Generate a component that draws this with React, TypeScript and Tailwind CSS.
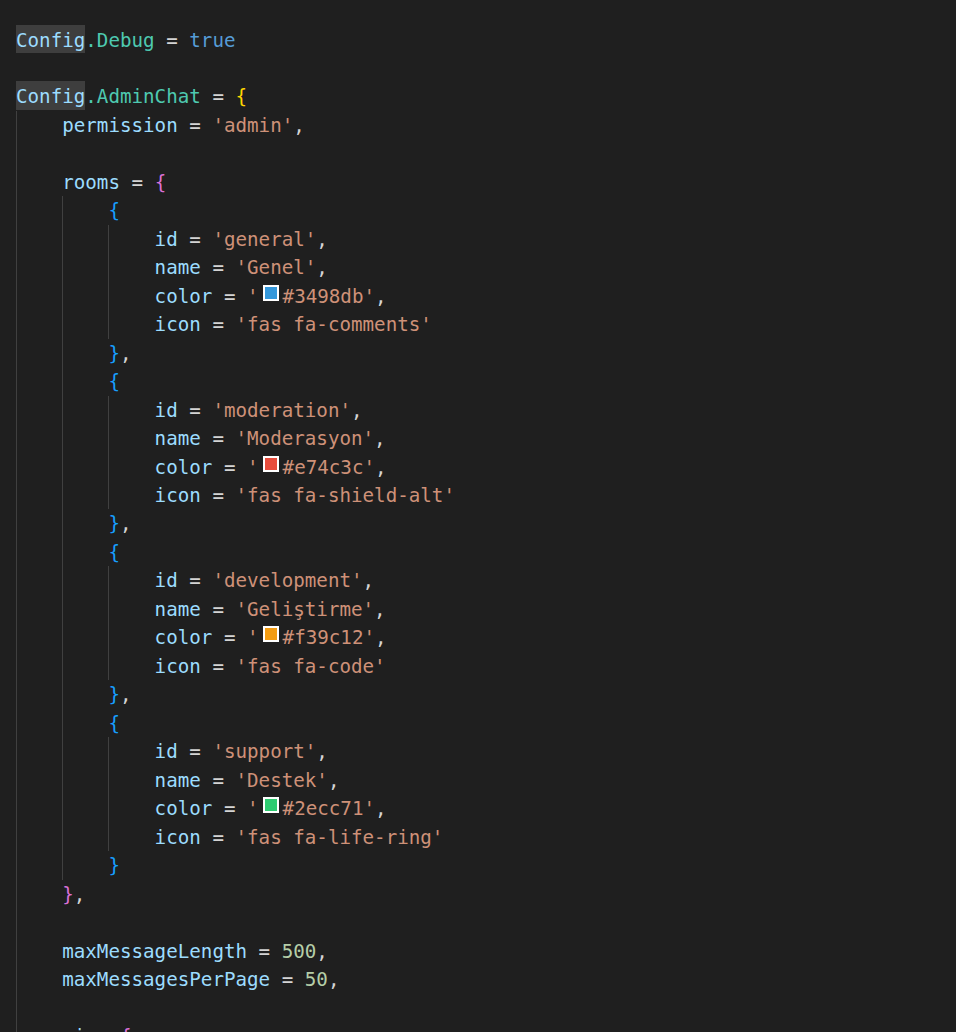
type Tok = { t: string; c?: string; hl?: boolean; swatch?: string };
type Line = { indent: number; toks: Tok[] };

const v = "text-[#9cdcfe]";
const p = "text-[#4ec9b0]";
const o = "text-[#d4d4d4]";
const s = "text-[#ce9178]";

const assign = (name: string, value: string): Tok[] => [
  { t: name, c: v },
  { t: " = ", c: o },
  { t: value, c: s },
  { t: ",", c: o },
];

const room = (id: string, name: string, color: string, icon: string): Line[] => [
  { indent: 2, toks: [{ t: "{", c: "text-[#179fff]" }] },
  { indent: 3, toks: assign("id", `'${id}'`) },
  { indent: 3, toks: assign("name", `'${name}'`) },
  {
    indent: 3,
    toks: [
      { t: "color", c: v },
      { t: " = ", c: o },
      { t: "'", c: s },
      { t: "", swatch: color },
      { t: `${color}'`, c: s },
      { t: ",", c: o },
    ],
  },
  {
    indent: 3,
    toks: [
      { t: "icon", c: v },
      { t: " = ", c: o },
      { t: `'${icon}'`, c: s },
    ],
  },
];

const lines: Line[] = [
  {
    indent: 0,
    toks: [
      { t: "Config", c: v, hl: true },
      { t: ".Debug", c: p },
      { t: " = ", c: o },
      { t: "true", c: "text-[#569cd6]" },
    ],
  },
  { indent: 0, toks: [] },
  {
    indent: 0,
    toks: [
      { t: "Config", c: v, hl: true },
      { t: ".AdminChat", c: p },
      { t: " = ", c: o },
      { t: "{", c: "text-[#ffd700]" },
    ],
  },
  { indent: 1, toks: assign("permission", "'admin'") },
  { indent: 1, toks: [] },
  {
    indent: 1,
    toks: [
      { t: "rooms", c: v },
      { t: " = ", c: o },
      { t: "{", c: "text-[#da70d6]" },
    ],
  },
  ...room("general", "Genel", "#3498db", "fas fa-comments"),
  { indent: 2, toks: [{ t: "}", c: "text-[#179fff]" }, { t: ",", c: o }] },
  ...room("moderation", "Moderasyon", "#e74c3c", "fas fa-shield-alt"),
  { indent: 2, toks: [{ t: "}", c: "text-[#179fff]" }, { t: ",", c: o }] },
  ...room("development", "Geliştirme", "#f39c12", "fas fa-code"),
  { indent: 2, toks: [{ t: "}", c: "text-[#179fff]" }, { t: ",", c: o }] },
  ...room("support", "Destek", "#2ecc71", "fas fa-life-ring"),
  { indent: 2, toks: [{ t: "}", c: "text-[#179fff]" }] },
  { indent: 1, toks: [{ t: "}", c: "text-[#da70d6]" }, { t: ",", c: o }] },
  { indent: 1, toks: [] },
  {
    indent: 1,
    toks: [
      { t: "maxMessageLength", c: v },
      { t: " = ", c: o },
      { t: "500", c: "text-[#b5cea8]" },
      { t: ",", c: o },
    ],
  },
  {
    indent: 1,
    toks: [
      { t: "maxMessagesPerPage", c: v },
      { t: " = ", c: o },
      { t: "50", c: "text-[#b5cea8]" },
      { t: ",", c: o },
    ],
  },
  { indent: 1, toks: [] },
  {
    indent: 1,
    toks: [
      { t: "ui", c: v },
      { t: " = ", c: o },
      { t: "{", c: "text-[#da70d6]" },
    ],
  },
];

function Token({ tok }: { tok: Tok }) {
  if (tok.swatch) {
    return (
      <span
        className="mx-[4px] mb-[2px] inline-block h-[16px] w-[16px] border-2 border-white"
        style={{ backgroundColor: tok.swatch }}
      />
    );
  }
  if (tok.hl) {
    // word highlight: inline padding so the box fills the line like the editor does
    return <span className={`bg-[#3e3e3e] pt-[4px] pb-[1.5px] ${tok.c}`}>{tok.t}</span>;
  }
  return <span className={tok.c}>{tok.t}</span>;
}

export default function App() {
  return (
    <div className="h-[1032px] w-full overflow-hidden bg-[#1f1f1f] pt-[25.5px] pl-4 font-['DejaVu_Sans_Mono',monospace] text-[19.2px] text-[#d4d4d4]">
      {lines.map((line, i) => (
        <div key={i} className="flex h-[28.47px] whitespace-pre leading-[28.47px]">
          {Array.from({ length: line.indent }).map((_, j) => (
            <span key={j} className="inline-block h-full w-[4ch] shrink-0 border-l border-[#404040]" />
          ))}
          <span className="pt-[1px]">
            {line.toks.map((tok, j) => (
              <Token key={j} tok={tok} />
            ))}
          </span>
        </div>
      ))}
    </div>
  );
}
